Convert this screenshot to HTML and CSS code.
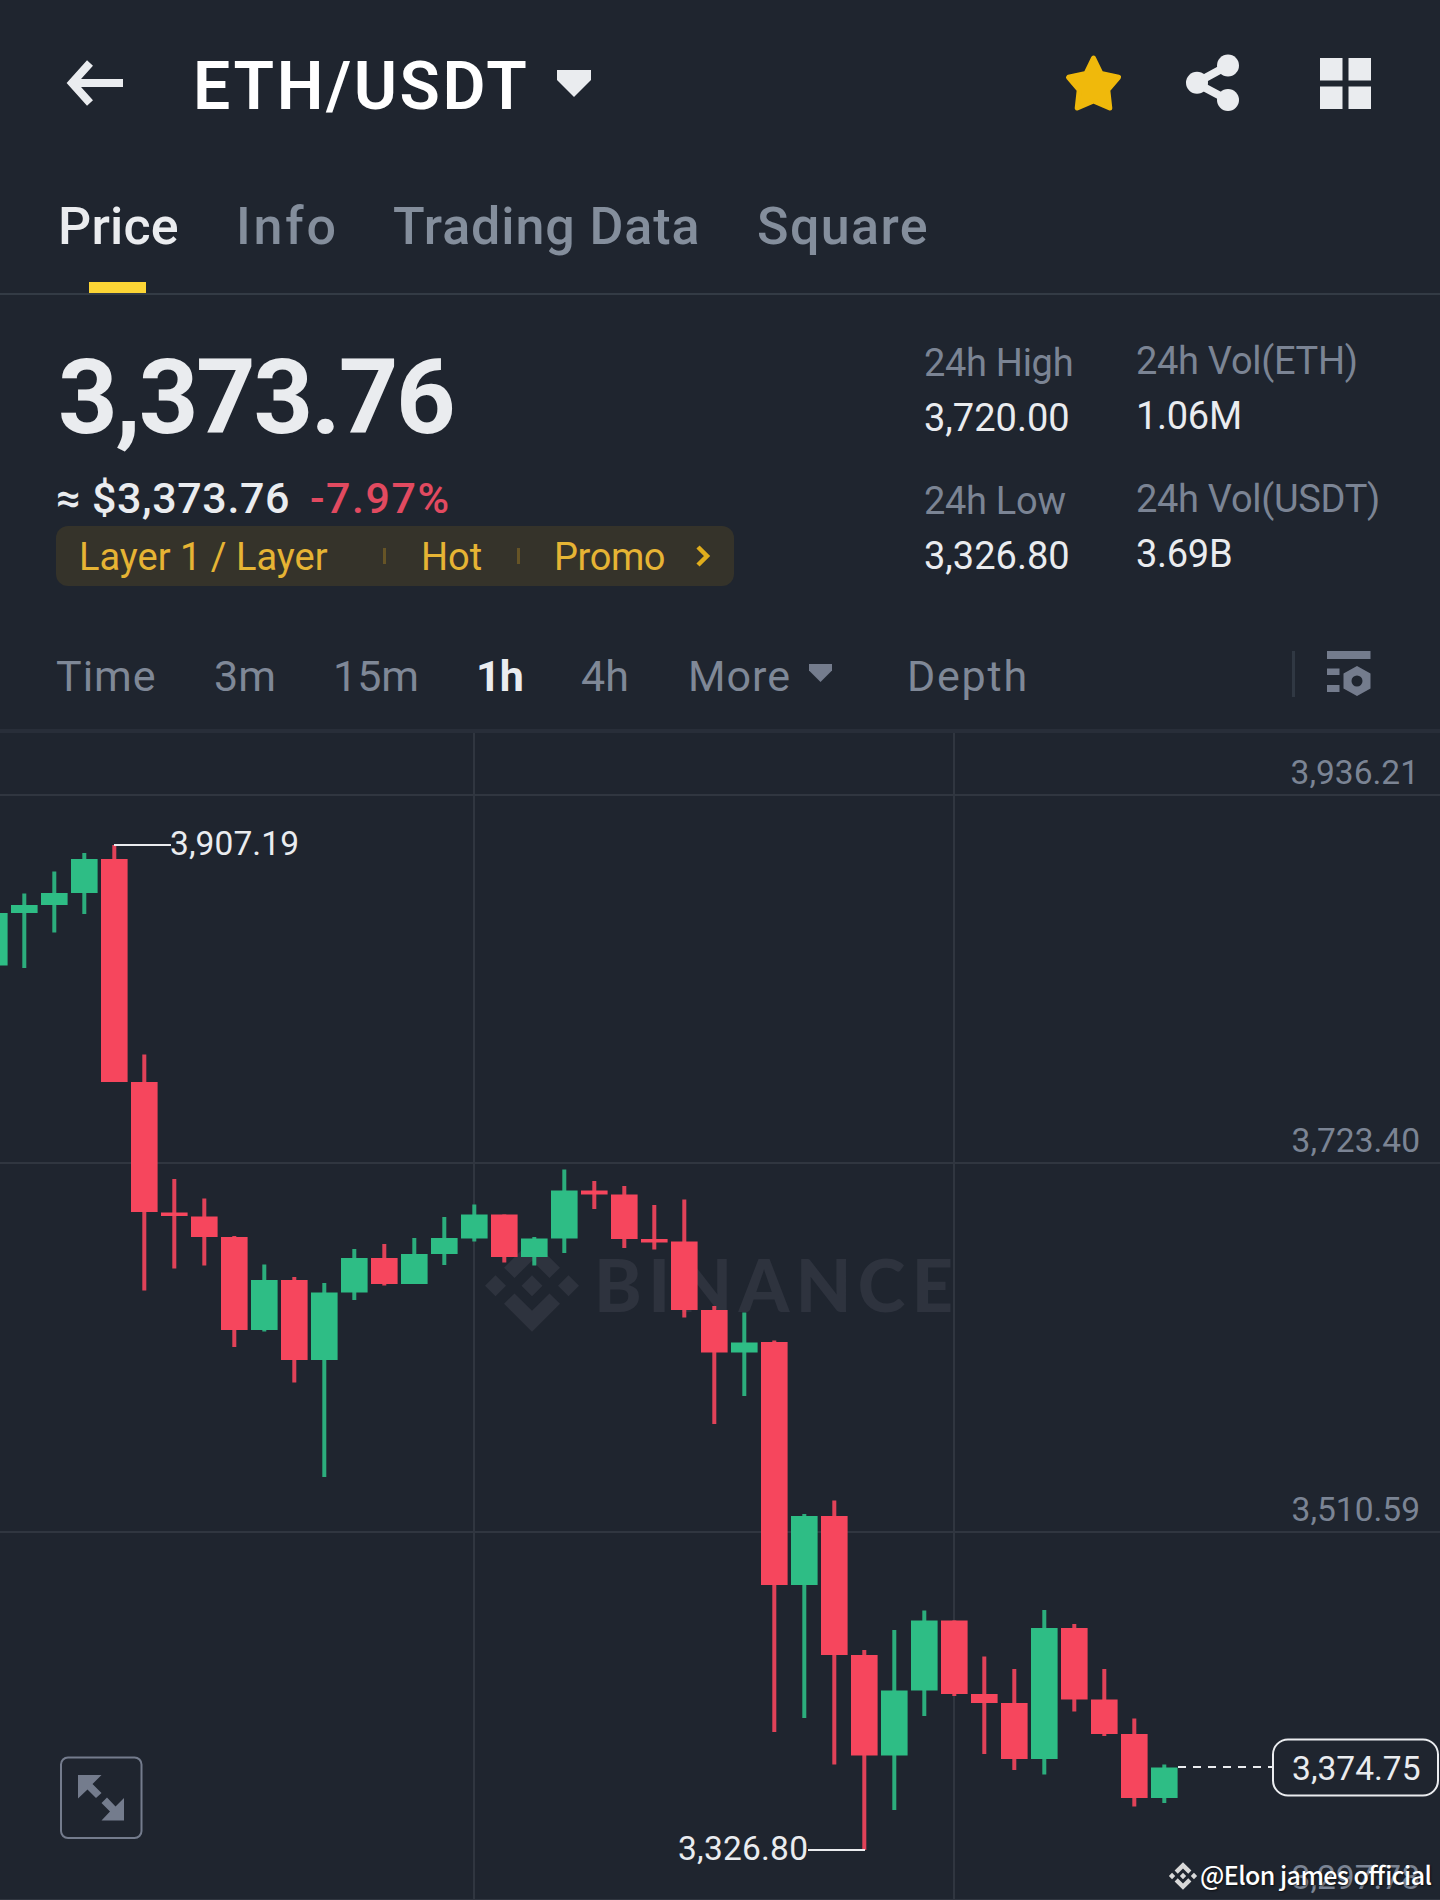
FILE: index.html
```html
<!DOCTYPE html>
<html lang="en">
    <head>
        <meta charset="UTF-8">
        <meta name="viewport" content="width=device-width, initial-scale=1.0">
        <title>ETH/USDT</title>
        <link rel="stylesheet" href="styles.css">
    </head>
    <body>
        <header class="topbar">
            <svg class="back" width="58" height="46" viewBox="0 0 58 46">
                <path d="M24 3 L6 23 L24 43 M6 23 H57" fill="none" stroke="#eaecef" stroke-width="8"/>
            </svg>
            <h1>ETH/USDT</h1>
            <svg class="caret" width="34" height="27" viewBox="0 0 34 27">
                <path d="M0 0 H34 V10 L17 27 L0 10 Z" fill="#eaecef"/>
            </svg>
            <div class="actions">
                <svg width="58" height="58" viewBox="0 0 58 58">
                    <path d="M29.500 4 L37 19.500 L54.500 23.300 L43.800 36 L45.800 54 L29.500 47 L13.200 54 L15.200 36 L4.500 23.300 L22 19.500 Z" fill="#f0b90b" stroke="#f0b90b" stroke-width="5" stroke-linejoin="round"/>
                </svg>
                <svg width="56" height="58" viewBox="0 0 56 58">
                    <path d="M42 11.500 L10 29 L42 46" fill="none" stroke="#eaecef" stroke-width="8"/>
                    <circle cx="42" cy="11.500" r="11" fill="#eaecef"/>
                    <circle cx="11" cy="28.800" r="11" fill="#eaecef"/>
                    <circle cx="42" cy="46" r="11" fill="#eaecef"/>
                </svg>
                <svg width="51" height="51" viewBox="0 0 51 51">
                    <path d="M0 0 H22.500 V22.500 H0 Z M28.500 0 H51 V22.500 H28.500 Z M0 28.500 H22.500 V51 H0 Z M28.500 28.500 H51 V51 H28.500 Z" fill="#eaecef"/>
                </svg>
            </div>
        </header>

        <nav class="tabs">
            <div class="tab active">Price</div>
            <div class="tab info">Info</div>
            <div class="tab trading">Trading Data</div>
            <div class="tab square">Square</div>
        </nav>

        <section class="summary">
            <div class="price">
                <div class="last">3,373.76</div>
                <div class="approx"><span class="about">≈</span> <span class="usd">$3,373.76</span> <span class="change">-7.97%</span></div>
                <div class="tags">
                    <span class="layer">Layer 1 / Layer</span>
                    <i></i>
                    <span class="hot">Hot</span>
                    <i></i>
                    <span class="promo">Promo</span>
                    <svg width="16" height="22" viewBox="0 0 16 22">
                        <path d="M3 2 L12 11 L3 20" fill="none" stroke="#e0ad1c" stroke-width="4.500"/>
                    </svg>
                </div>
            </div>
            <div class="stats">
                <div class="stat-col">
                    <div class="label">24h High</div>
                    <div class="value">3,720.00</div>
                    <div class="label">24h Low</div>
                    <div class="value">3,326.80</div>
                </div>
                <div class="stat-col vol">
                    <div class="label">24h Vol(ETH)</div>
                    <div class="value">1.06M</div>
                    <div class="label">24h Vol(USDT)</div>
                    <div class="value">3.69B</div>
                </div>
            </div>
        </section>

        <nav class="intervals">
            <span>Time</span>
            <span>3m</span>
            <span>15m</span>
            <span class="active">1h</span>
            <span>4h</span>
            <span class="more">More
                <svg width="23" height="18" viewBox="0 0 23 18">
                    <path d="M0 0 H23 V6.500 L11.500 18 L0 6.500 Z" fill="#747c8d"/>
                </svg>
            </span>
            <span class="depth">Depth</span>
            <div class="settings">
                <svg width="46" height="46" viewBox="0 0 46 46">
                    <path d="M0 0 H43.500 V8 H0 Z M0 17.500 H12.500 V24 H0 Z M0 34 H12.500 V41 H0 Z" fill="#747c8d"/>
                    <path fill-rule="evenodd" d="M30 15 L43.500 22.500 V37.500 L30 45 L16.500 37.500 V22.500 Z M30 24.500 A5.500 5.500 0 1 0 30 35.500 A5.500 5.500 0 1 0 30 24.500 Z" fill="#747c8d"/>
                </svg>
            </div>
        </nav>

        <svg class="chart" width="1440" height="1167" viewBox="0 733 1440 1167">
            <defs>
                <g id="logo">
                    <path d="M0 -46 L28 -18 L17.500 -7.700 L0 -25 L-17.500 -7.700 L-28 -18 Z"/>
                    <path d="M0 46 L28 18 L17.500 7.700 L0 25 L-17.500 7.700 L-28 18 Z"/>
                    <path d="M0 -10.500 L10.500 0 L0 10.500 L-10.500 0 Z M-36.500 -10.500 L-26 0 L-36.500 10.500 L-47 0 Z M36.500 -10.500 L47 0 L36.500 10.500 L26 0 Z"/>
                </g>
            </defs>
            <path class="grid" d="M0 795 H1440 M0 1163 H1440 M0 1532 H1440 M0 1900 H1440 M474 733 V1900 M954 733 V1900"/>
            <g class="brand">
                <use href="#logo" x="532" y="1285.700"/>
                <text x="594" y="1312" textLength="359">BINANCE</text>
            </g>
            <g id="candles"></g>

            <path class="marker" d="M114 845 H171 M808 1850 H865"/>
            <text class="note" x="170" y="855" textLength="129">3,907.19</text>
            <text class="note" x="678" y="1860" textLength="130">3,326.80</text>

            <g class="axis">
                <text x="1419" y="784">3,936.21</text>
                <text x="1420" y="1152">3,723.40</text>
                <text x="1420" y="1521">3,510.59</text>
                <text x="1420" y="1889">3,297.78</text>
            </g>
            <path class="marker" d="M1178 1767 H1273" stroke-dasharray="8 7"/>
            <rect class="badge" x="1273" y="1739.500" width="165" height="56" rx="15"/>
            <text class="note end" x="1420.500" y="1780">3,374.75</text>

            <rect class="expand" x="61" y="1757.500" width="80.500" height="80.500" rx="7"/>
            <path fill="#747c8d" d="M78 1775 H101.500 L92.500 1784 L101.500 1793 L96 1798 L87.500 1789.500 L78 1798.500 Z M124 1820.500 H101.500 L110 1811.500 L101.500 1803 L107 1797.500 L115.500 1806.500 L124 1798 Z"/>

            <g class="author">
                <use href="#logo" transform="translate(1183 1876) scale(0.300)"/>
                <text x="1200" y="1885" textLength="232">@Elon james official</text>
            </g>
        </svg>

        <script>
            // [direction, wick top, body top, body bottom, wick bottom]
            const candles = [
                ['up', 913, 913, 965.5, 965.5],
                ['up', 893.5, 905, 913, 968],
                ['up', 871.5, 893, 905, 932.5],
                ['up', 853, 859, 893, 914],
                ['down', 845, 859, 1082, 1082],
                ['down', 1054.5, 1082, 1212, 1290.5],
                ['down', 1179, 1212.5, 1216, 1268.5],
                ['down', 1198.5, 1216.5, 1237, 1265.5],
                ['down', 1236, 1237, 1330, 1347],
                ['up', 1264.5, 1280, 1330, 1331.5],
                ['down', 1277, 1280, 1360, 1382.5],
                ['up', 1283, 1292.5, 1360, 1477],
                ['up', 1249, 1258, 1292.5, 1300],
                ['down', 1244, 1258, 1284, 1285.5],
                ['up', 1238, 1254, 1284, 1284],
                ['up', 1217, 1238, 1254, 1265],
                ['up', 1204.5, 1214.5, 1238.5, 1241.5],
                ['down', 1214.5, 1214.5, 1257, 1262.5],
                ['up', 1237, 1238.5, 1257, 1265.5],
                ['up', 1169.5, 1190.5, 1238.5, 1253],
                ['down', 1181, 1190.5, 1194.5, 1209],
                ['down', 1186, 1194.5, 1239, 1248],
                ['down', 1205, 1239, 1242.5, 1249.5],
                ['down', 1199.5, 1241.5, 1310, 1317.5],
                ['down', 1306, 1310, 1352.5, 1424],
                ['up', 1312.5, 1342.5, 1352.5, 1396],
                ['down', 1340.5, 1342, 1585, 1732],
                ['up', 1514, 1516, 1585, 1718],
                ['down', 1500.5, 1516, 1655, 1764.5],
                ['down', 1650, 1655, 1755.5, 1850],
                ['up', 1630, 1690.5, 1755.5, 1810],
                ['up', 1610.5, 1620.5, 1690.5, 1716],
                ['down', 1620.5, 1620.5, 1694, 1696],
                ['down', 1656.5, 1694, 1703, 1754],
                ['down', 1669, 1703, 1759, 1770],
                ['up', 1610, 1628, 1759, 1774.5],
                ['down', 1624, 1628, 1699.5, 1711.5],
                ['down', 1669, 1699.5, 1734, 1736],
                ['down', 1718.5, 1734, 1798, 1806.5],
                ['up', 1764.5, 1767.5, 1798, 1803]
            ];

            const step = 30;
            document.getElementById('candles').innerHTML = candles.map(([dir, high, top, bottom, low], i) => {
                const x = 24.3 + (i - 1) * step;
                return `<g class="${dir}">
                    <rect class="wick" x="${x - 2}" y="${high}" width="4" height="${low - high}"/>
                    <rect x="${x - 13.3}" y="${top}" width="26.600" height="${bottom - top}"/>
                </g>`;
            }).join('');
        </script>
    </body>
</html>
```
FILE: styles.css
```css
* {
    box-sizing: border-box;
}

body {
    margin: 0;
    width: 1440px;
    height: 1900px;
    overflow: hidden;
    background-color: #1f252f;
    color: #eaecef;
    font-family: Roboto, "Liberation Sans", sans-serif;
    white-space: nowrap;
}

svg {
    display: block;
    flex: none;
}

.topbar {
    display: flex;
    align-items: center;
    height: 166px;
    padding: 0 69px 0 66px;
}

h1 {
    margin: 7px 29px 0 69px;
    width: 335px;
    color: #fff;
    font-size: 66px;
    font-weight: 600;
    letter-spacing: 2.6px;
}

.actions {
    display: flex;
    align-items: center;
    gap: 64px;
    margin-left: auto;
}

.actions svg:nth-child(3) {
    margin-left: 14px;
}

.tabs {
    display: grid;
    grid-template-columns: 178px 157px 364px 1fr;
    height: 129px;
    padding-left: 58px;
    border-bottom: 2px solid #333b45;
}

.tab {
    padding-top: 30px;
    color: #848e9c;
    font-size: 52px;
    font-weight: 500;
    line-height: 62px;
}

.tab.info {
    letter-spacing: 2.8px;
}

.tab.trading {
    letter-spacing: 0.9px;
}

.tab.square {
    letter-spacing: 1.4px;
}

.tab.active {
    color: #eaecef;
    letter-spacing: 0.2px;
}

.tab.active::after {
    content: "";
    display: block;
    width: 57px;
    height: 11px;
    margin: 24px 0 0 31px;
    background-color: #fcd535;
}

.summary {
    display: flex;
    justify-content: space-between;
    height: 338px;
    padding: 39px 58px 0 56px;
}

.last {
    height: 128px;
    padding-left: 2px;
    font-size: 104px;
    font-weight: 700;
    line-height: 128px;
    letter-spacing: -2.3px;
}

.approx {
    display: flex;
    height: 64px;
    font-size: 43px;
    font-weight: 500;
    line-height: 72px;
}

.about {
    width: 36px;
}

.usd {
    width: 218px;
    letter-spacing: 0.6px;
}

.change {
    color: #e24a60;
    letter-spacing: 1.5px;
}

.tags {
    display: flex;
    align-items: center;
    width: 678px;
    height: 60px;
    padding-left: 23px;
    border-radius: 12px;
    background-color: #35332a;
    color: #e6b434;
    font-size: 38px;
    line-height: 60px;
}

.tags span {
    padding-top: 2px;
}

.tags i {
    width: 3px;
    height: 16px;
    background-color: #665426;
}

.layer {
    width: 304px;
}

.hot {
    width: 96px;
    margin-left: 35px;
}

.promo {
    width: 141px;
    margin-left: 34px;
    letter-spacing: -0.4px;
}

.stats {
    display: grid;
    grid-template-columns: 212px 246px;
    padding-top: 4px;
    font-size: 38px;
}

.stat-col.vol {
    margin-top: -2px;
}

.label {
    height: 51px;
    color: #7b8494;
    line-height: 51px;
    letter-spacing: -0.3px;
}

.value {
    height: 87px;
    line-height: 58px;
}

.vol .value {
    letter-spacing: -0.3px;
}

.intervals {
    display: flex;
    height: 96px;
    padding-left: 56px;
    color: #7f8897;
    font-size: 43px;
    line-height: 86px;
}

.intervals span {
    flex: none;
}

.intervals .active {
    color: #eaecef;
    font-weight: 700;
    letter-spacing: -0.8px;
}

.intervals span:nth-child(1) {
    width: 158px;
    letter-spacing: 1px;
}

.intervals span:nth-child(2) {
    width: 119px;
}

.intervals span:nth-child(3) {
    width: 143px;
}

.intervals span:nth-child(4) {
    width: 105px;
}

.intervals span:nth-child(5) {
    width: 107px;
}

.intervals .more {
    display: flex;
    gap: 18px;
    width: 219px;
    letter-spacing: 1px;
}

.more svg {
    margin-top: 31px;
}

.intervals .depth {
    letter-spacing: 1.8px;
}

.settings {
    height: 46px;
    margin: 18px 67px 0 auto;
    padding-left: 32px;
    border-left: 3px solid #303843;
}

.chart {
    height: 1171px;
    border-top: 4px solid #282e39;
}

.grid {
    fill: none;
    stroke: #303640;
    stroke-width: 2;
}

.brand {
    fill: #2e333e;
}

.brand text {
    font-family: Lato, sans-serif;
    font-size: 72px;
    font-weight: 900;
}

.up {
    fill: #2ebd85;
}

.down {
    fill: #f6465d;
}

.wick {
    opacity: 0.9;
}

.marker {
    fill: none;
    stroke: #eaecef;
    stroke-width: 2;
}

.note {
    fill: #eaecef;
    font-size: 33.5px;
}

.end {
    text-anchor: end;
}

.axis {
    fill: #7b8494;
    font-size: 33.5px;
    text-anchor: end;
}

.badge {
    fill: #1f252f;
    stroke: #eaecef;
    stroke-width: 2;
}

.expand {
    fill: none;
    stroke: #747c8d;
    stroke-width: 2;
}

.author {
    fill: #d9d9d9;
}

.author text {
    fill: #fff;
    font-family: "Noto Sans CJK SC", sans-serif;
    font-size: 25px;
    font-weight: 500;
    text-shadow: 1px 1px 2px rgba(0, 0, 0, 0.6);
}
```
